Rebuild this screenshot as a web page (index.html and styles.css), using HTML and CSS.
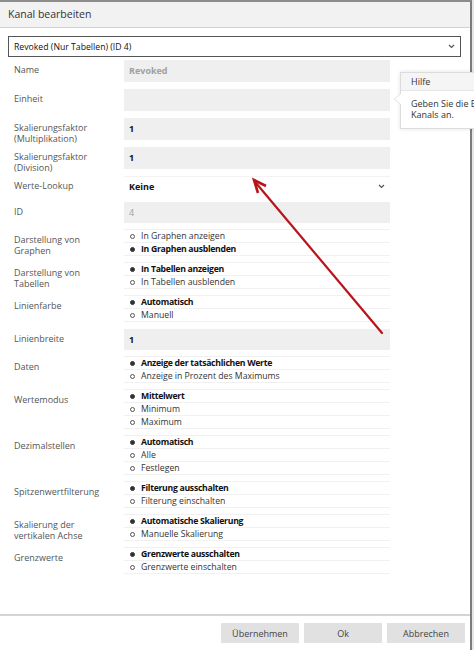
FILE: index.html
```html
<!DOCTYPE html>
<html>
<head>
    <title>Kanal bearbeiten</title>
    <meta charset="utf-8" />
    <link rel="stylesheet" href="styles.css">
</head>
<body>
    <div class="dialog">
        <div class="dialog-head">Kanal bearbeiten</div>

        <div class="channel-select">
            <span>Revoked (Nur Tabellen) (ID 4)</span>
            <svg class="chev" width="7" height="5" viewBox="0 0 7 5"><path d="M1 1 L3.5 3.5 L6 1" fill="none" stroke="#555" stroke-width="1.2"/></svg>
        </div>

        <div class="form">
            <div class="row">
                <div class="label">Name</div>
                <div class="input disabled">Revoked</div>
            </div>
            <div class="row">
                <div class="label">Einheit</div>
                <div class="input"></div>
            </div>
            <div class="row">
                <div class="label">Skalierungsfaktor<br>(Multiplikation)</div>
                <div class="input">1</div>
            </div>
            <div class="row">
                <div class="label">Skalierungsfaktor<br>(Division)</div>
                <div class="input">1</div>
            </div>
            <div class="row">
                <div class="label">Werte-Lookup</div>
                <div class="lookup">
                    <span>Keine</span>
                    <svg class="chev" width="7" height="5" viewBox="0 0 7 5"><path d="M1 1 L3.5 3.5 L6 1" fill="none" stroke="#555" stroke-width="1.2"/></svg>
                </div>
            </div>
            <div class="row">
                <div class="label">ID</div>
                <div class="input disabled short">4</div>
            </div>
            <div class="row">
                <div class="label">Darstellung von<br>Graphen</div>
                <div class="radios">
                    <div class="opt"><span class="dot"></span>In Graphen anzeigen</div>
                    <div class="opt on"><span class="dot"></span>In Graphen ausblenden</div>
                </div>
            </div>
            <div class="row">
                <div class="label">Darstellung von<br>Tabellen</div>
                <div class="radios">
                    <div class="opt on"><span class="dot"></span>In Tabellen anzeigen</div>
                    <div class="opt"><span class="dot"></span>In Tabellen ausblenden</div>
                </div>
            </div>
            <div class="row">
                <div class="label">Linienfarbe</div>
                <div class="radios">
                    <div class="opt on"><span class="dot"></span>Automatisch</div>
                    <div class="opt"><span class="dot"></span>Manuell</div>
                </div>
            </div>
            <div class="row">
                <div class="label">Linienbreite</div>
                <div class="input short">1</div>
            </div>
            <div class="row">
                <div class="label">Daten</div>
                <div class="radios">
                    <div class="opt on"><span class="dot"></span>Anzeige der tatsächlichen Werte</div>
                    <div class="opt"><span class="dot"></span>Anzeige in Prozent des Maximums</div>
                </div>
            </div>
            <div class="row">
                <div class="label">Wertemodus</div>
                <div class="radios">
                    <div class="opt on"><span class="dot"></span>Mittelwert</div>
                    <div class="opt"><span class="dot"></span>Minimum</div>
                    <div class="opt"><span class="dot"></span>Maximum</div>
                </div>
            </div>
            <div class="row">
                <div class="label">Dezimalstellen</div>
                <div class="radios">
                    <div class="opt on"><span class="dot"></span>Automatisch</div>
                    <div class="opt"><span class="dot"></span>Alle</div>
                    <div class="opt"><span class="dot"></span>Festlegen</div>
                </div>
            </div>
            <div class="row">
                <div class="label">Spitzenwertfilterung</div>
                <div class="radios">
                    <div class="opt on"><span class="dot"></span>Filterung ausschalten</div>
                    <div class="opt"><span class="dot"></span>Filterung einschalten</div>
                </div>
            </div>
            <div class="row">
                <div class="label">Skalierung der<br>vertikalen Achse</div>
                <div class="radios">
                    <div class="opt on"><span class="dot"></span>Automatische Skalierung</div>
                    <div class="opt"><span class="dot"></span>Manuelle Skalierung</div>
                </div>
            </div>
            <div class="row">
                <div class="label">Grenzwerte</div>
                <div class="radios">
                    <div class="opt on"><span class="dot"></span>Grenzwerte ausschalten</div>
                    <div class="opt"><span class="dot"></span>Grenzwerte einschalten</div>
                </div>
            </div>
        </div>

        <div class="dialog-foot">
            <button class="btn">Übernehmen</button>
            <button class="btn">Ok</button>
            <button class="btn">Abbrechen</button>
        </div>
    </div>

    <div class="help">
        <div class="help-head">Hilfe</div>
        <div class="help-body">Geben Sie die Bezeichnung des<br>Kanals an.</div>
    </div>

    <svg class="marker" width="474" height="650" viewBox="0 0 474 650">
        <line x1="382" y1="333" x2="256" y2="183" stroke="#b8141c" stroke-width="2.2" stroke-linecap="round"/>
        <polyline points="266,186 254,180 258,193" fill="none" stroke="#b8141c" stroke-width="2.6" stroke-linejoin="miter"/>
    </svg>
</body>
</html>
```

FILE: styles.css
```css
html, body {
    margin: 0;
    padding: 0;
}

body {
    width: 474px;
    height: 650px;
    overflow: hidden;
    position: relative;
    background-color: #e6e6e6;
    font-family: "Open Sans", "Liberation Sans", sans-serif;
    font-size: 9px;
    color: #222;
}

.dialog {
    width: 470px;
    height: 648px;
    border-top: 2px solid #8c8c8c;
    border-right: 2px solid #7c7c7c;
    background-color: #fff;
    display: flex;
    flex-direction: column;
}

.dialog-head {
    height: 25px;
    line-height: 25px;
    padding-left: 8px;
    font-size: 10.5px;
    color: #333;
    background-color: #f2f2f2;
    border-bottom: 1px solid #d2d2d2;
}

.channel-select {
    margin: 8px 9px 0 8px;
    height: 19px;
    border: 1px solid #555;
    display: flex;
    align-items: center;
    justify-content: space-between;
    padding: 0 5px 0 5px;
    font-size: 8.7px;
    color: #111;
}

.chev {
    display: block;
}

.form {
    flex: 1;
    padding: 3px 0 0 14px;
    overflow: hidden;
}

.row {
    display: grid;
    grid-template-columns: 110px 266px;
    margin-bottom: 7px;
}

.label {
    padding-top: 4px;
    line-height: 11px;
    margin-bottom: -6px;
    color: #555;
}

.input {
    height: 22px;
    line-height: 22px;
    padding-left: 5px;
    background-color: #efefef;
    font-weight: 700;
    color: #111;
}

.input.short {
    height: 21px;
    line-height: 21px;
}

.input.disabled {
    color: #a0a0a0;
}

.input.short.disabled {
    font-weight: 400;
}

.lookup {
    height: 18px;
    border-top: 1px solid #f3f3f3;
    padding: 0 5px;
    display: flex;
    align-items: center;
    justify-content: space-between;
    font-weight: 700;
    color: #111;
}

.radios {
    box-shadow: 0 -1px 0 #f1f1f1;
}

.opt {
    height: 11px;
    line-height: 11px;
    padding-top: 1px;
    border-bottom: 1px solid #f1f1f1;
    display: flex;
    align-items: center;
    padding-left: 6px;
    font-size: 8.7px;
    color: #333;
}

.opt.on {
    font-weight: 700;
    letter-spacing: -0.3px;
    color: #111;
}

.dot {
    width: 3px;
    height: 3px;
    border: 1px solid #555;
    border-radius: 50%;
    margin-right: 6px;
    flex: none;
}

.opt.on .dot {
    background-color: #333;
    border-color: #333;
}

.dialog-foot {
    border-top: 2px solid #d4d4d4;
    padding: 7px 5px 7px 0;
    display: flex;
    justify-content: flex-end;
    gap: 5px;
}

.btn {
    width: 78px;
    height: 20px;
    border: 0;
    background-color: #e1e1e1;
    font-family: "Open Sans", "Liberation Sans", sans-serif;
    font-size: 9px;
    color: #444;
    padding: 0;
}

.help {
    position: absolute;
    left: 400px;
    top: 72px;
    width: 73px;
    background-color: #fff;
    border: 1px solid #dcdcdc;
    border-right: 0;
    box-shadow: 0 0 4px rgba(0,0,0,0.12);
}

.help::before {
    content: "";
    position: absolute;
    left: -7px;
    top: 20px;
    border-top: 6px solid transparent;
    border-bottom: 6px solid transparent;
    border-right: 7px solid #dcdcdc;
}

.help::after {
    content: "";
    position: absolute;
    left: -6px;
    top: 20px;
    border-top: 6px solid transparent;
    border-bottom: 6px solid transparent;
    border-right: 7px solid #fff;
}

.help-head {
    height: 17px;
    line-height: 17px;
    padding-left: 10px;
    background-color: #f5f5f5;
    border-bottom: 1px solid #e6e6e6;
    color: #333;
}

.help-body {
    padding: 7px 0 8px 10px;
    line-height: 11px;
    white-space: nowrap;
    overflow: hidden;
    color: #333;
}

.marker {
    position: absolute;
    left: 0;
    top: 0;
    pointer-events: none;
}
```
